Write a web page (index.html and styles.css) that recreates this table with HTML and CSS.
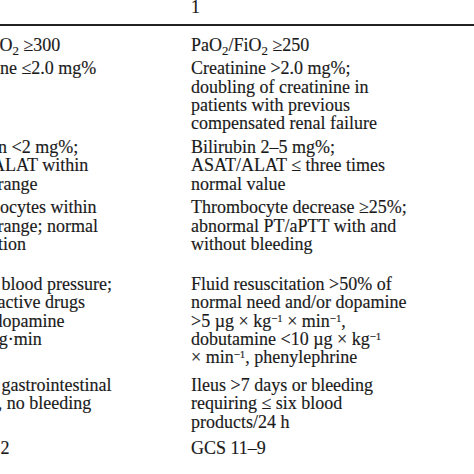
FILE: index.html
```html
<!DOCTYPE html>
<html lang="en">
<head>
<meta charset="utf-8">
<title>Organ dysfunction grading</title>
<link rel="stylesheet" href="styles.css">
</head>
<body>
<div class="table">
  <div class="head">
    <div class="cell">0</div>
    <div class="cell">1</div>
  </div>
  <div class="body">
    <div class="row">
      <div class="cell">PaO<sub>2</sub>/FiO<sub>2</sub> ≥300</div>
      <div class="cell">PaO<sub>2</sub>/FiO<sub>2</sub> ≥250</div>
    </div>
    <div class="row">
      <div class="cell">Creatinine ≤2.0 mg%</div>
      <div class="cell">Creatinine &gt;2.0 mg%;<br>doubling of creatinine in<br>patients with previous<br>compensated renal failure</div>
    </div>
    <div class="row">
      <div class="cell">Bilirubin &lt;2 mg%;<br>ASAT/ALAT within<br>normal range</div>
      <div class="cell">Bilirubin 2–5 mg%;<br>ASAT/ALAT ≤ three times<br>normal value</div>
    </div>
    <div class="row row-tall">
      <div class="cell">Thrombocytes within<br>normal range; normal<br>coagulation</div>
      <div class="cell">Thrombocyte decrease ≥25%;<br>abnormal PT/aPTT with and<br>without bleeding</div>
    </div>
    <div class="row">
      <div class="cell">Normal blood pressure;<br>no vasoactive drugs<br>except dopamine<br>≤5 µg/kg·min</div>
      <div class="cell">Fluid resuscitation &gt;50% of<br>normal need and/or dopamine<br>&gt;5 µg × kg<sup>−1</sup> × min<sup>−1</sup>,<br>dobutamine &lt;10 µg × kg<sup>−1</sup><br>× min<sup>−1</sup>, phenylephrine</div>
    </div>
    <div class="row row-gut">
      <div class="cell">Normal gastrointestinal<br>motility, no bleeding</div>
      <div class="cell">Ileus &gt;7 days or bleeding<br>requiring ≤ six blood<br>products/24 h</div>
    </div>
    <div class="row row-cns">
      <div class="cell">GCS ≥12</div>
      <div class="cell">GCS 11–9</div>
    </div>
  </div>
</div>
</body>
</html>
```
FILE: styles.css
```css
html, body {
  margin: 0;
  padding: 0;
  background: #ffffff;
}

body {
  width: 474px;
  height: 474px;
  overflow: hidden;
  font-family: "Liberation Serif", "Times New Roman", serif;
  font-size: 18px;
  color: #1a1a1a;
  -webkit-text-stroke: 0.15px #1a1a1a;
}

.table {
  margin-left: -58px;
  width: 560px;
}

.head,
.row {
  display: grid;
  grid-template-columns: 249px 1fr;
  white-space: nowrap;
}

.head {
  line-height: 14px;
  padding-bottom: 10px;
  border-bottom: 2px solid #222222;
}

.body {
  display: flex;
  flex-direction: column;
  gap: 5.5px;
  padding-top: 9.5px;
}

.row {
  line-height: 18.3px;
}

.row-tall {
  padding-bottom: 16.3px;
}

.row-gut {
  margin-top: 4px;
}

.row-cns {
  margin-top: 3px;
}

sub {
  font-size: 0.72em;
  line-height: 0;
  vertical-align: -0.28em;
}

sup {
  font-size: 0.6em;
  line-height: 0;
  vertical-align: 0.5em;
}
```
